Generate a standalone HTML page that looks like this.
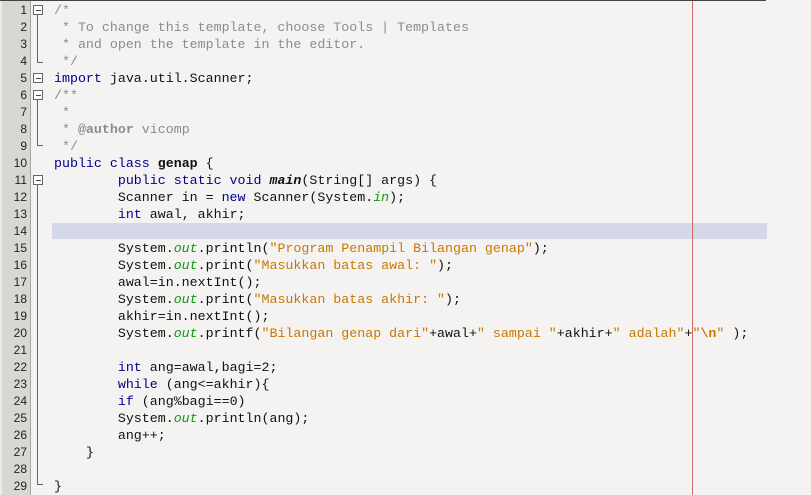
<!DOCTYPE html>
<html><head><meta charset="utf-8"><style>
html,body{margin:0;padding:0;}
body{width:811px;height:495px;overflow:hidden;background:#f4f3f1;position:relative;font-family:"Liberation Mono",monospace;}
.top{position:absolute;left:0;top:0;width:766px;height:1px;background:#444;}
.gut{position:absolute;left:0;top:0;width:30px;height:495px;background:#d9d7d1;border-left:2px solid #ecebe7;box-sizing:border-box;}
.gutl{position:absolute;left:30px;top:0;width:1px;height:495px;background:#a9a7a2;}
.num{position:absolute;left:0;width:27px;text-align:right;font-family:"Liberation Sans",sans-serif;font-size:12px;color:#222;line-height:17px;}
.hl{position:absolute;left:52px;top:223px;width:715px;height:16px;background:#d5d8e6;}
.red{position:absolute;left:692px;top:0;width:1px;height:495px;background:#d46a6a;}
.fb{position:absolute;left:33px;width:8px;height:8px;border:1px solid #666;background:#fff;}
.fb:after{content:"";position:absolute;left:2px;top:4px;width:5px;height:1px;background:#444;}
.vl{position:absolute;left:37px;width:1px;background:#666;}
.hk{position:absolute;left:37px;width:6px;height:1px;background:#666;}
pre{position:absolute;left:54px;top:2px;margin:0;font-size:13.3px;line-height:17px;color:#111;font-family:"Liberation Mono",monospace;}
.c{color:#8c8c8c}.k{color:#00008b}.s{color:#c87800}.f{color:#119911;font-style:italic}.b{font-weight:bold}
</style></head><body>
<div class="gut"></div><div class="gutl"></div>
<div class="hl"></div>
<div class="red"></div>
<div class="top"></div>
<div class="num" style="top:2px">1<br>2<br>3<br>4<br>5<br>6<br>7<br>8<br>9<br>10<br>11<br>12<br>13<br>14<br>15<br>16<br>17<br>18<br>19<br>20<br>21<br>22<br>23<br>24<br>25<br>26<br>27<br>28<br>29</div>
<div class="vl" style="top:15px;height:47px"></div><div class="hk" style="top:62px"></div>
<div class="fb" style="top:5px"></div>
<div class="fb" style="top:73px"></div>
<div class="vl" style="top:100px;height:45px"></div><div class="hk" style="top:145px"></div>
<div class="fb" style="top:90px"></div>
<div class="vl" style="top:185px;height:299px"></div><div class="hk" style="top:484px"></div>
<div class="fb" style="top:175px"></div>
<pre><span class="c">/*
 * To change this template, choose Tools | Templates
 * and open the template in the editor.
 */</span>
<span class="k">import</span> java.util.Scanner;
<span class="c">/**
 *
 * <b>@author</b> vicomp
 */</span>
<span class="k">public class</span> <b>genap</b> {
        <span class="k">public static void</span> <b><i>main</i></b>(String[] args) {
        Scanner in = <span class="k">new</span> Scanner(System.<span class="f">in</span>);
        <span class="k">int</span> awal, akhir;

        System.<span class="f">out</span>.println(<span class="s">"Program Penampil Bilangan genap"</span>);
        System.<span class="f">out</span>.print(<span class="s">"Masukkan batas awal: "</span>);
        awal=in.nextInt();
        System.<span class="f">out</span>.print(<span class="s">"Masukkan batas akhir: "</span>);
        akhir=in.nextInt();
        System.<span class="f">out</span>.printf(<span class="s">"Bilangan genap dari"</span>+awal+<span class="s">" sampai "</span>+akhir+<span class="s">" adalah"</span>+<span class="s">"<b>\n</b>"</span> );

        <span class="k">int</span> ang=awal,bagi=2;
        <span class="k">while</span> (ang&lt;=akhir){
        <span class="k">if</span> (ang%bagi==0)
        System.<span class="f">out</span>.println(ang);
        ang++;
    }

}</pre>
</body></html>
